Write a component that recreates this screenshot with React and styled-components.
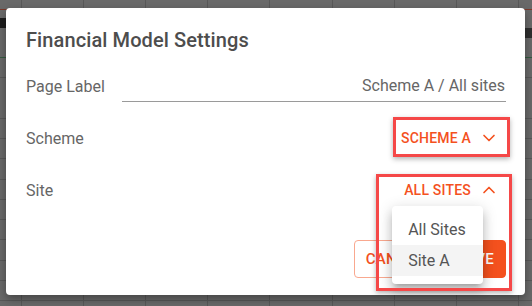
import React from "react";
import styled, { createGlobalStyle } from "styled-components";
import { ChevronDown, ChevronUp } from "lucide-react";

const ACCENT = "#f4511e";
const MARK = "#f54848";

const Global = createGlobalStyle`
  html, body { margin: 0; padding: 0; }
  body { font-family: Roboto, "Liberation Sans", Arial, sans-serif; background: #686868; }
  * { box-sizing: border-box; }
`;

const Page = styled.div`
  position: relative;
  width: 532px;
  height: 306px;
  display: flex;
  padding: 8px 7px 11px 6px;
  overflow: hidden;
  background:
    linear-gradient(#7a3a2c, #7a3a2c) 0 9px / 100% 1px no-repeat,
    linear-gradient(#1c1c1c, #1c1c1c) 0 18px / 10px 10px no-repeat,
    linear-gradient(#2e2e2e, #2e2e2e) 520px 28px / 12px 10px no-repeat,
    linear-gradient(#355b40, #355b40) 0 57px / 100% 1px no-repeat,
    repeating-linear-gradient(to bottom, transparent 0 19.25px, #585858 19.25px 20.25px) 0 58px / 100% 100% no-repeat,
    repeating-linear-gradient(to right, transparent 0 21px, #585858 21px 22px, transparent 22px 62.1px) -62.1px 0 / 200% 100% no-repeat,
    #696969;
`;

const Dialog = styled.div`
  flex: 1;
  display: flex;
  flex-direction: column;
  background: #fff;
  border-radius: 4px;
  padding: 16px 19px 17px 20px;
  box-shadow: 0 4px 10px rgba(0, 0, 0, 0.35);
`;

const Title = styled.h2`
  margin: 0;
  font-size: 20px;
  line-height: 32px;
  font-weight: 500;
  color: #4d4d4d;
  letter-spacing: 0.1px;
`;

const Rows = styled.div`
  margin-top: 4px;
  display: flex;
  flex-direction: column;
`;

const Row = styled.div`
  height: 52px;
  display: flex;
  align-items: center;
  justify-content: space-between;
`;

const Label = styled.span`
  width: 96px;
  flex: none;
  font-size: 16px;
  color: #666;
`;

const TextInput = styled.input`
  flex: 1;
  height: 32px;
  border: none;
  border-bottom: 1px solid #9a9a9a;
  outline: none;
  padding: 0 1px 0 0;
  font-family: inherit;
  font-size: 16px;
  color: #666;
  text-align: right;
  background: transparent;
`;

const SelectWrap = styled.div`
  position: relative;
  display: inline-flex;
`;

const SelectButton = styled.button`
  height: 36px;
  display: inline-flex;
  align-items: center;
  gap: 8px;
  padding: 0 7px 0 8px;
  border: none;
  background: transparent;
  font-family: inherit;
  font-size: 14px;
  font-weight: 500;
  letter-spacing: 0.2px;
  text-transform: uppercase;
  color: ${ACCENT};
  cursor: pointer;
`;

const Highlight = styled.span`
  position: absolute;
  top: ${(p) => p.$top}px;
  right: ${(p) => p.$right}px;
  bottom: ${(p) => p.$bottom}px;
  left: ${(p) => p.$left}px;
  border: 3px solid ${MARK};
  box-shadow: 0 2px 5px rgba(0, 0, 0, 0.3);
  pointer-events: none;
  z-index: 3;
`;

const Menu = styled.ul`
  position: absolute;
  top: 34px;
  left: -4px;
  width: 91px;
  margin: 0;
  padding: 8px 0;
  list-style: none;
  background: #fff;
  border-radius: 4px;
  box-shadow: 0 5px 5px -3px rgba(0, 0, 0, 0.2), 0 8px 10px 1px rgba(0, 0, 0, 0.14),
    0 3px 14px 2px rgba(0, 0, 0, 0.12);
  z-index: 2;
`;

const MenuItem = styled.li`
  height: 31px;
  display: flex;
  align-items: center;
  padding: 0 16px;
  font-size: 16px;
  color: #555;
  white-space: nowrap;
  background: ${(p) => (p.$active ? "#f4f4f4" : "transparent")};
`;

const Footer = styled.div`
  margin-top: 24px;
  display: flex;
  justify-content: flex-end;
  gap: 8px;
`;

const ActionButton = styled.button`
  height: 38px;
  padding: 0 11px;
  border-radius: 4px;
  font-family: inherit;
  font-size: 15px;
  font-weight: 500;
  letter-spacing: 0.3px;
  text-transform: uppercase;
  border: 1px solid ${(p) => (p.$filled ? ACCENT : "#f9a88f")};
  background: ${(p) => (p.$filled ? ACCENT : "#fff")};
  color: ${(p) => (p.$filled ? "#fff" : ACCENT)};
`;

export default function App() {
  return (
    <>
      <Global />
      <Page>
        <Dialog>
          <Title>Financial Model Settings</Title>
          <Rows>
            <Row>
              <Label>Page Label</Label>
              <TextInput defaultValue="Scheme A / All sites" />
            </Row>
            <Row>
              <Label>Scheme</Label>
              <SelectWrap>
                <SelectButton>
                  Scheme A
                  <ChevronDown size={20} strokeWidth={2} />
                </SelectButton>
                <Highlight $top={-3} $right={-4} $bottom={-1} $left={0} />
              </SelectWrap>
            </Row>
            <Row>
              <Label>Site</Label>
              <SelectWrap>
                <SelectButton>
                  All Sites
                  <ChevronUp size={20} strokeWidth={2} />
                </SelectButton>
                <Menu>
                  <MenuItem>All Sites</MenuItem>
                  <MenuItem $active>Site A</MenuItem>
                </Menu>
                <Highlight $top={2} $right={-6} $bottom={-83} $left={-20} />
              </SelectWrap>
            </Row>
          </Rows>
          <Footer>
            <ActionButton>Cancel</ActionButton>
            <ActionButton $filled>Save</ActionButton>
          </Footer>
        </Dialog>
      </Page>
    </>
  );
}
